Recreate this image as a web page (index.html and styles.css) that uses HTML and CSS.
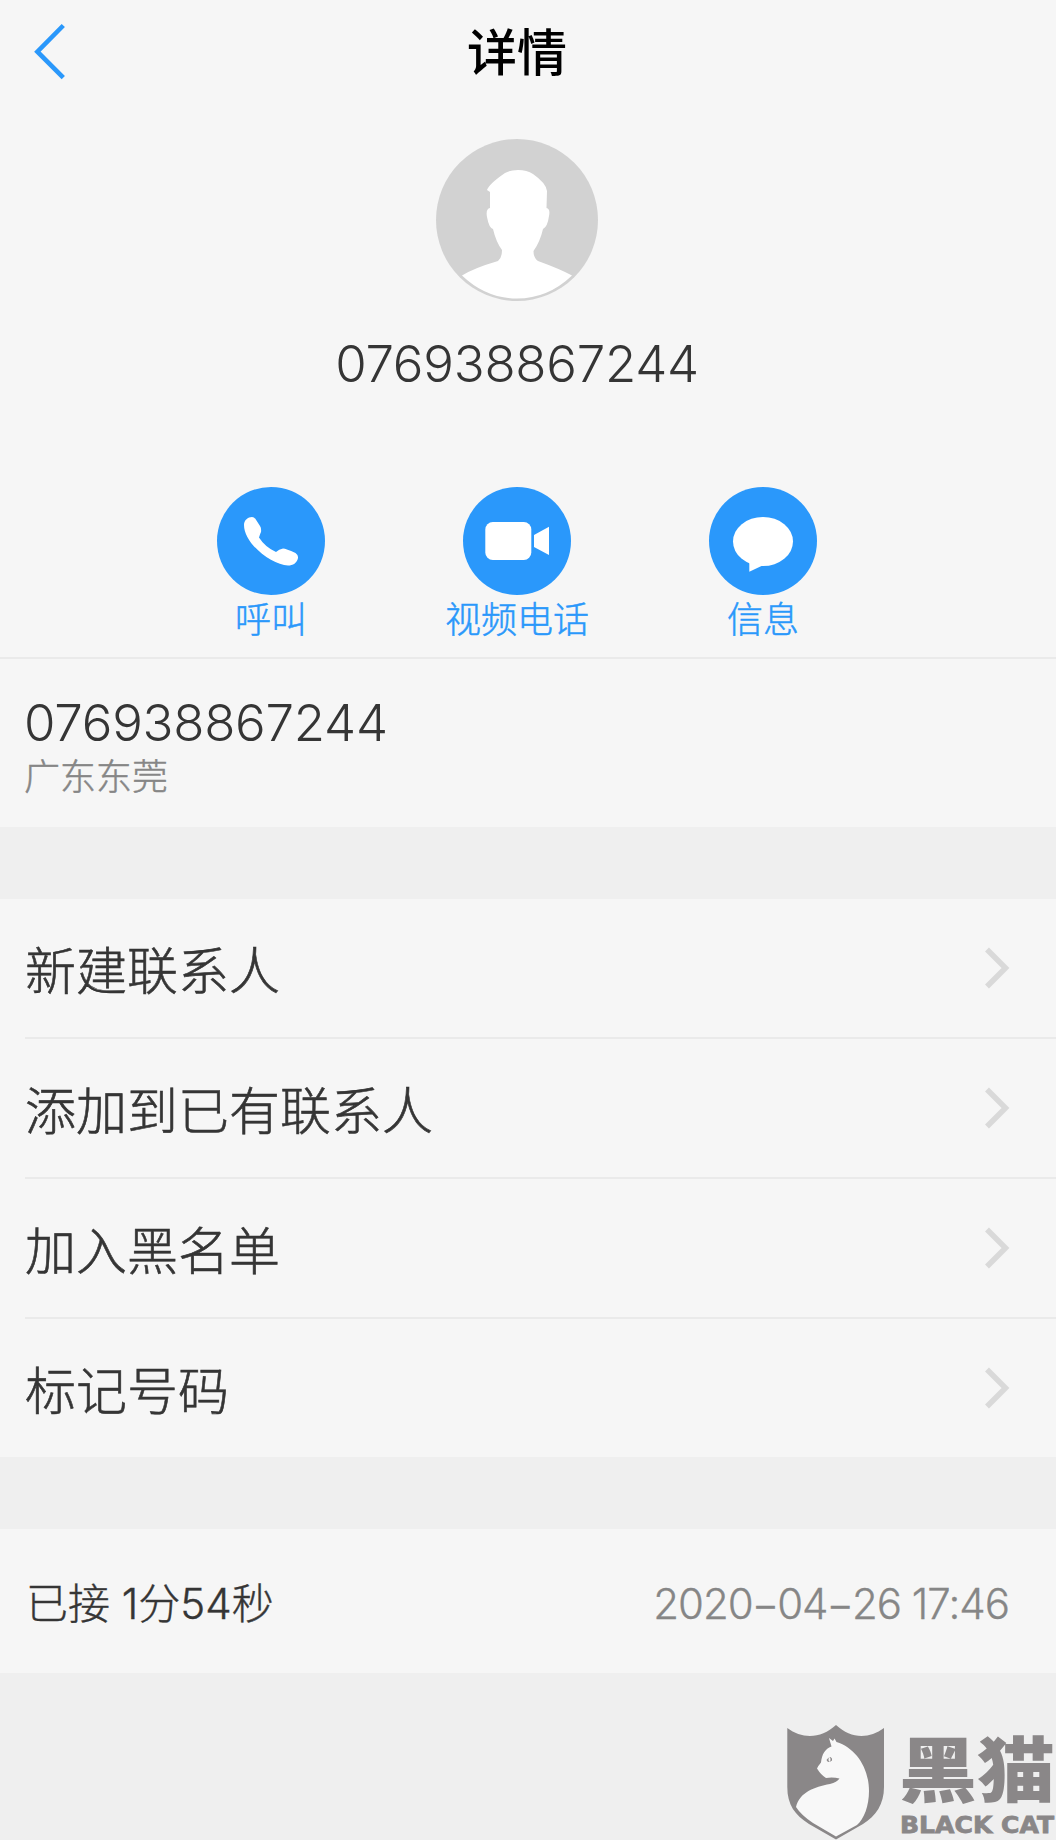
FILE: index.html
```html
<!DOCTYPE html>
<html lang="zh-CN">
<head>
  <meta charset="UTF-8" />
  <meta name="viewport" content="width=device-width, initial-scale=1.0"/>
  <title>详情</title>
  <link rel="stylesheet" href="styles.css">
</head>
<body>

  <header>
    <a class="back" href="#" aria-label="返回">
      <svg width="36" height="60" viewBox="0 0 36 60"><path d="M32.300 3.500 L6.400 29.700 L32.300 55.700" fill="none" stroke="#2a98fb" stroke-width="4.600"/></svg>
    </a>
    <h1>详情</h1>
  </header>

  <section class="profile">
    <svg class="avatar" width="162" height="162" viewBox="0 0 162 162">
      <circle cx="81" cy="81" r="81" fill="#d2d2d2"/>
      <path fill="#fff" d="M26 136.500 Q38 129 62 122 Q66 119 66 111 Q60 103 57 90 Q53 89 51 78 Q49.500 70 54 69 L54 53 L51 51 Q53 45 69 34 Q74 31 82 31 Q91 31 97 35 Q110 44 111 52 L110.500 69 Q114.500 70 113 77 Q111.500 88 107 90 Q104 103 97.500 112 Q97.500 119 102 122 Q124 130 136 136.500 Q112 159.500 81 159.500 Q50 159.500 26 136.500 Z"/>
    </svg>
    <div class="name">076938867244</div>

    <div class="actions">
      <a class="action" href="#">
        <svg width="108" height="108" viewBox="0 0 108 108">
          <circle cx="54" cy="54" r="54" fill="#2a98fb"/>
          <path fill="#fff" d="M27 38 C27 33 31 30 35 30 Q37 30 38.500 32 L43 39 Q44.500 41 44 45 Q43 47 42 50.500 Q48 60 59 65 Q62 62 66 61.500 Q69 61.500 78.500 66 Q81.500 68 81 71 C80 76 76 78.500 71 78.500 C55 78 27 57 27 38 Z"/>
        </svg>
        <span>呼叫</span>
      </a>
      <a class="action" href="#">
        <svg width="108" height="108" viewBox="0 0 108 108">
          <circle cx="54" cy="54" r="54" fill="#2a98fb"/>
          <rect x="22.300" y="35" width="46" height="38" rx="7.500" fill="#fff"/>
          <path d="M71 48 L86 39.700 V68 L71 60 Z" fill="#fff"/>
        </svg>
        <span>视频电话</span>
      </a>
      <a class="action" href="#">
        <svg width="108" height="108" viewBox="0 0 108 108">
          <circle cx="54" cy="54" r="54" fill="#2a98fb"/>
          <ellipse cx="54" cy="54.500" rx="30" ry="24.500" fill="#fff"/>
          <path d="M40.300 75 V84.700 L53 78.700 L50 72 Z" fill="#fff"/>
        </svg>
        <span>信息</span>
      </a>
    </div>
  </section>

  <section class="number">
    <div class="number-value">076938867244</div>
    <div class="number-place">广东东莞</div>
  </section>

  <ul class="menu">
    <li>
      <span>新建联系人</span>
      <svg width="26" height="42" viewBox="0 0 26 42"><path d="M2 2.500 L20.500 21 L2 39.500" fill="none" stroke="#d9d9d9" stroke-width="5.500"/></svg>
    </li>
    <li>
      <span>添加到已有联系人</span>
      <svg width="26" height="42" viewBox="0 0 26 42"><path d="M2 2.500 L20.500 21 L2 39.500" fill="none" stroke="#d9d9d9" stroke-width="5.500"/></svg>
    </li>
    <li>
      <span>加入黑名单</span>
      <svg width="26" height="42" viewBox="0 0 26 42"><path d="M2 2.500 L20.500 21 L2 39.500" fill="none" stroke="#d9d9d9" stroke-width="5.500"/></svg>
    </li>
    <li>
      <span>标记号码</span>
      <svg width="26" height="42" viewBox="0 0 26 42"><path d="M2 2.500 L20.500 21 L2 39.500" fill="none" stroke="#d9d9d9" stroke-width="5.500"/></svg>
    </li>
  </ul>

  <section class="record">
    <span class="record-type">已接 1分54秒</span>
    <span class="record-time">2020<i>−</i>04<i>−</i>26 17:46</span>
  </section>

  <footer>
    <svg width="286" height="140" viewBox="0 0 286 140">
      <path fill="#8a8788" d="M17.300 28 C32 39 51 39 66 25 C81 39 99 39 114 28 V87 C114 104 106 116 93 124 L66 139.500 L39 124 C25 115 17.300 105 17.300 87 Z"/>
      <path fill="#f8f8f8" d="M59 38 L63 41 L64.500 38.500 L66.500 42 C86 48 99 68 99 91 C99 106 94 119 87 125 L66 136.500 L43 123 Q31 115 26 107 C30 92 44 87 60 84 Q67 82 69.500 78.500 Q63 77 56 78 Q51 75 47 68.500 Q48 66 51 62.500 C52 54 55 49 61.500 46.500 Z"/>
      <path fill="#8a8788" d="M56.500 60 Q58 57.500 60.500 57 Q62.500 58 62 60.500 Q60 62 58 62 Z"/>
      <ellipse cx="59.500" cy="59.500" rx="1" ry="2.300" fill="#f8f8f8"/>
      <text class="brand" x="129" y="96" textLength="156" lengthAdjust="spacingAndGlyphs">黑猫</text>
      <text class="brand-en" x="130" y="132.500" textLength="154" lengthAdjust="spacingAndGlyphs">BLACK CAT</text>
    </svg>
  </footer>

</body>
</html>
```
FILE: styles.css
```css
* {
  margin: 0;
  padding: 0;
  box-sizing: border-box;
}

body {
  font-family: Inter, "Noto Sans CJK SC", sans-serif;
  font-weight: 300;
  color: #353535;
  background: #efefef;
  height: 1840px;
  display: flex;
  flex-direction: column;
  overflow: hidden;
}

a {
  color: #2a98fb;
  text-decoration: none;
}

svg {
  display: block;
}

header {
  display: grid;
  grid-template-columns: 120px 1fr 142px;
  align-items: center;
  height: 118px;
  background: #f6f6f6;
}

.back {
  padding-left: 31px;
  margin-top: -14px;
}

h1 {
  font-size: 50px;
  font-weight: 500;
  line-height: 60px;
  margin-top: -12px;
  text-align: center;
  color: #000;
}

.profile {
  display: flex;
  flex-direction: column;
  align-items: center;
  height: 541px;
  padding: 21px 22px 0 0;
  background: #f6f6f6;
  border-bottom: 2px solid #eaeaea;
}

.name {
  margin-top: 32px;
  font-size: 51px;
  line-height: 62px;
}

.name,
.number-value {
  letter-spacing: -0.25px;
}

.actions {
  display: grid;
  grid-template-columns: repeat(3, 246px);
  margin-top: 92px;
}

.action {
  display: flex;
  flex-direction: column;
  align-items: center;
  font-size: 36px;
  line-height: 50px;
  -webkit-text-stroke: 0.5px;
}

.number {
  height: 168px;
  padding: 33px 24px 0;
  background: #f6f6f6;
}

.number-value {
  font-size: 51px;
  line-height: 62px;
}

.number-place {
  font-size: 36px;
  line-height: 46px;
  color: #868686;
  -webkit-text-stroke: 0.5px;
}

.menu {
  margin: 72px 0;
  padding-left: 25px;
  list-style: none;
  background: #f6f6f6;
}

.menu li {
  display: flex;
  justify-content: space-between;
  align-items: center;
  height: 140px;
  padding-right: 45px;
  font-size: 51px;
  border-bottom: 2px solid #eaeaea;
  -webkit-text-stroke: 0.6px;
}

.menu li:last-child {
  height: 138px;
  border-bottom: none;
}

.record {
  display: flex;
  justify-content: space-between;
  align-items: center;
  height: 144px;
  padding: 4px 47px 0 26px;
  font-size: 42px;
  background: #f6f6f6;
}

.record-type {
  padding-bottom: 6px;
  -webkit-text-stroke: 0.4px;
}

.record-time {
  color: #868686;
  letter-spacing: -1px;
  -webkit-text-stroke: 0.3px;
}

.record-time i {
  font-style: normal;
  margin: 0 -1px;
}

footer {
  display: flex;
  justify-content: flex-end;
  margin-top: 27px;
}

.brand {
  font-family: "Noto Sans CJK SC", sans-serif;
  font-size: 71px;
  font-weight: 900;
  fill: #8a8788;
}

.brand-en {
  font-family: "DejaVu Sans", sans-serif;
  font-size: 23px;
  font-weight: 700;
  fill: #8a8788;
  stroke: #8a8788;
  stroke-width: 0.8px;
}
```
